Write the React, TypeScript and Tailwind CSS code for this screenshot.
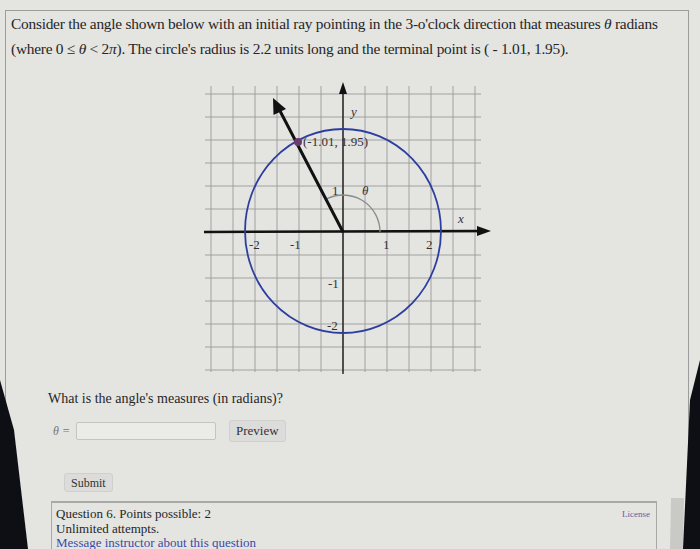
import React from 'react';

const serif = { fontFamily: '"Liberation Serif", "Times New Roman", serif' };

const Graph: React.FC = () => {
  const vx = [210, 232, 254, 276, 298, 320, 342, 364, 386, 408, 430, 452, 474];
  const hy = [94, 117, 140, 163, 186, 209, 232, 255, 278, 301, 324, 347, 370];
  return (
    <svg width="300" height="300" viewBox="195 78 300 300" className="block">
      {vx.map((x) => (
        <line key={`v${x}`} x1={x} y1={86} x2={x} y2={372} stroke="#9a9a9a" strokeWidth="0.9" />
      ))}
      {hy.map((y) => (
        <line key={`h${y}`} x1={204} y1={y} x2={480} y2={y} stroke="#9a9a9a" strokeWidth="0.9" />
      ))}
      {/* axes */}
      <line x1={203} y1={232} x2={478} y2={231} stroke="#111" strokeWidth="2.4" />
      <polygon points="490,231 476,226 476,236" fill="#111" />
      <line x1={342} y1={92} x2={342} y2={374} stroke="#111" strokeWidth="1.3" />
      <polygon points="342,82 338,94 346,94" fill="#111" />
      {/* circle */}
      <ellipse cx={342} cy={231} rx={98} ry={102} fill="none" stroke="#2c3fa0" strokeWidth="1.8" />
      {/* angle arc */}
      <path d="M 379 232 A 37 37 0 0 0 325.5 198.9" fill="none" stroke="#8a8a8a" strokeWidth="1.3" />
      {/* terminal ray */}
      <line x1={342} y1={232} x2={278} y2={109} stroke="#111" strokeWidth="3" />
      <polygon points="272,98 272.5,115 285,109" fill="#111" />
      <circle cx={297} cy={142} r={4} fill="#6b3a6e" />
      {/* labels */}
      <g style={serif} fill="#333" fontSize="13">
        <text x={302} y={146}>(-1.01, 1.95)</text>
        <text x={248} y={249}>-2</text>
        <text x={289} y={249}>-1</text>
        <text x={382} y={249}>1</text>
        <text x={425} y={249}>2</text>
        <text x={331} y={195}>1</text>
        <text x={327} y={288}>-1</text>
        <text x={326} y={330}>-2</text>
        <text x={457} y={223} fontStyle="italic">x</text>
        <text x={350} y={116} fontStyle="italic">y</text>
        <text x={361} y={195} fontStyle="italic">θ</text>
      </g>
    </svg>
  );
};

const App: React.FC = () => {
  return (
    <div className="relative w-[700px] h-[549px] overflow-hidden bg-[#e4e4e1] text-[#262626]" style={serif}>
      {/* question panel */}
      <div className="absolute left-[5px] top-[10px] w-[684px] h-[600px] border-l border-t border-r border-[#9c9c9c]">
        <div className="pl-[5px] text-[15.4px] leading-[25px] tracking-[-0.25px] whitespace-nowrap">
          <p>
            Consider the angle shown below with an initial ray pointing in the 3-o'clock direction that measures <i>θ</i> radians
          </p>
          <p>
            (where 0 ≤ <i>θ</i> &lt; 2<i>π</i>). The circle's radius is 2.2 units long and the terminal point is ( - 1.01, 1.95).
          </p>
        </div>

        <div className="ml-[190px] mt-[17px]">
          <Graph />
        </div>

        <div className="ml-[42px] mt-[10px] text-[14px]">
          <p>What is the angle's measures (in radians)?</p>
          <div className="flex items-center mt-[11px]">
            <span className="w-[28px] pl-[5px] text-[12px] text-[#777] italic">θ =</span>
            <div className="w-[140px] h-[18px] border border-[#c4c4c4] bg-[#ebebe8] rounded-[2px]" />
            <button className="ml-[13px] h-[22px] px-[6px] bg-[#dcdcda] border border-[#cfcfcc] rounded-[3px] text-[13px] text-[#333]">
              Preview
            </button>
          </div>
          <button className="mt-[31px] ml-[16px] h-[19px] px-[6px] bg-[#dcdcda] border border-[#cfcfcc] rounded-[3px] text-[12px] text-[#333]">
            Submit
          </button>
        </div>

        <div className="ml-[45px] mt-[8px] mr-[31px] border-t-2 border-l border-r border-[#a8a8a6] pt-[4px] pl-[4px] pr-[6px] flex justify-between">
          <div className="text-[13px] leading-[14.5px]">
            <p>Question 6. Points possible: 2</p>
            <p>Unlimited attempts.</p>
            <p className="text-[#3b4aa6]">Message instructor about this question</p>
          </div>
          <span className="text-[9px] text-[#5a62a8] mt-[1px]">License</span>
        </div>
      </div>

      {/* dark edges of the monitor in the photo */}
      <div className="absolute inset-0 pointer-events-none bg-[#0d0f14] [clip-path:polygon(0_380px,14px_430px,28px_549px,0_549px)]" />
      <div className="absolute inset-0 pointer-events-none bg-[#c9c9c6] [clip-path:polygon(671px_498px,684px_498px,683px_549px,670px_549px)]" />
      <div className="absolute inset-0 pointer-events-none bg-[#0d0f14] [clip-path:polygon(700px_360px,700px_549px,683px_549px,690px_400px)]" />
    </div>
  );
};

export default App;
